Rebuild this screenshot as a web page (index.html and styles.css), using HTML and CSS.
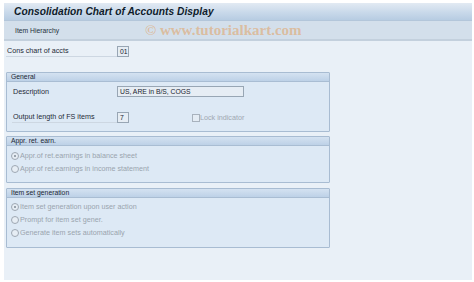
FILE: index.html
```html
<!DOCTYPE html>
<html>
<head>
<meta charset="utf-8">
<link rel="stylesheet" href="styles.css">
</head>
<body>
<div class="window">
  <div class="titlebar"><span class="title">Consolidation Chart of Accounts Display</span></div>
  <div class="toolbar">
    <span class="tool">Item Hierarchy</span>
    <span class="watermark">© www.tutorialkart.com</span>
  </div>
  <div class="content">
    <div class="row top-row">
      <span class="label label-ul">Cons chart of accts</span>
      <span class="input w-short">01</span>
    </div>

    <div class="group group-general">
      <div class="group-head">General</div>
      <div class="group-body">
        <div class="row row-desc">
          <span class="label">Description</span>
          <span class="input w-long">US, ARE in B/S, COGS</span>
        </div>
        <div class="row row-out">
          <span class="label label-ul">Output length of FS items</span>
          <span class="input w-short">7</span>
          <span class="check"><span class="box"></span>Lock indicator</span>
        </div>
      </div>
    </div>

    <div class="group group-appr">
      <div class="group-head">Appr. ret. earn.</div>
      <div class="group-body radios">
        <div class="radio"><span class="dot on"></span>Appr.of ret.earnings in balance sheet</div>
        <div class="radio"><span class="dot"></span>Appr.of ret.earnings in income statement</div>
      </div>
    </div>

    <div class="group group-item">
      <div class="group-head">Item set generation</div>
      <div class="group-body radios">
        <div class="radio"><span class="dot on"></span>Item set generation upon user action</div>
        <div class="radio"><span class="dot"></span>Prompt for item set gener.</div>
        <div class="radio"><span class="dot"></span>Generate item sets automatically</div>
      </div>
    </div>
  </div>
</div>
</body>
</html>
```

FILE: styles.css
```css
html, body {
  margin: 0;
  padding: 0;
  background: #ffffff;
}
body {
  font-family: "Liberation Sans", Arial, sans-serif;
  font-size: 7.2px;
  color: #1d2a38;
}
.window {
  margin: 3px 2px 0 4px;
  width: 468px;
  height: 277px;
  display: flex;
  flex-direction: column;
  background: #e9f0f7;
}
.titlebar {
  height: 18px;
  display: flex;
  align-items: center;
  padding-left: 10px;
  background: linear-gradient(#e2eaf3, #c9d9ea 55%, #b7cce2);
  border-bottom: 1px solid #b3c6da;
  box-sizing: border-box;
}
.title {
  font-weight: bold;
  font-style: italic;
  font-size: 10.2px;
  color: #0e1b2a;
  letter-spacing: 0.05px;
}
.toolbar {
  height: 20px;
  display: flex;
  align-items: center;
  padding-left: 11px;
  background: #d3dfeb;
  border-bottom: 2px solid #c3d0dd;
  box-sizing: border-box;
  position: relative;
}
.tool {
  font-size: 6.8px;
  color: #26313d;
}
.watermark {
  position: absolute;
  left: 141px;
  top: 1px;
  font-family: "Liberation Serif", "Times New Roman", serif;
  font-weight: bold;
  font-size: 15px;
  color: rgba(226, 160, 96, 0.55);
}
.content {
  flex: 1;
  display: flex;
  flex-direction: column;
  padding: 5px 0 0 2px;
}
.row {
  display: flex;
  align-items: center;
  height: 11px;
}
.label {
  width: 111px;
  box-sizing: border-box;
  padding-left: 1px;
  line-height: 10px;
}
.label-ul {
  border-bottom: 1px solid #cdd7e2;
}
.input {
  height: 11px;
  box-sizing: border-box;
  border: 1px solid #98a6b4;
  background: #e6edf4;
  line-height: 9px;
  padding-left: 2px;
  font-size: 6.8px;
  color: #1a2430;
}
.w-short {
  width: 12px;
}
.w-long {
  width: 127px;
}
.group {
  width: 324px;
  box-sizing: border-box;
  border: 1px solid #a8bcd2;
  background: #dde9f5;
  border-radius: 1px;
}
.group-head {
  height: 8px;
  line-height: 8px;
  padding-left: 4px;
  background: linear-gradient(#d4e2f1, #bdd1e7);
  border-bottom: 1px solid #a9bdd3;
  font-size: 6.8px;
  color: #1a2633;
}
.group-general {
  margin-top: 15px;
  height: 60px;
}
.group-general .group-body {
  padding: 4px 0 0 5px;
}
.group-general .label {
  width: 105px;
}
.row-out {
  margin-top: 15px;
}
.check {
  display: flex;
  align-items: center;
  margin-left: 63px;
  color: #9fa8b2;
}
.box {
  width: 6px;
  height: 6px;
  border: 1px solid #a8b2bd;
  background: #e4ecf4;
}
.group-appr {
  margin-top: 4px;
  height: 47px;
}
.group-appr .radios {
  padding-top: 3px;
}
.group-item {
  margin-top: 5px;
  height: 60px;
}
.group-item .radios {
  padding-top: 2px;
}
.radios {
  padding-left: 4px;
  display: flex;
  flex-direction: column;
}
.radio {
  height: 13px;
  display: flex;
  align-items: center;
  color: #9aa4ae;
}
.dot {
  width: 6px;
  height: 6px;
  border: 1px solid #9ea8b3;
  border-radius: 50%;
  background: #e6edf4;
  margin-right: 1px;
  position: relative;
}
.dot.on::after {
  content: "";
  position: absolute;
  left: 2px;
  top: 2px;
  width: 2px;
  height: 2px;
  border-radius: 50%;
  background: #7f8a96;
}
```
